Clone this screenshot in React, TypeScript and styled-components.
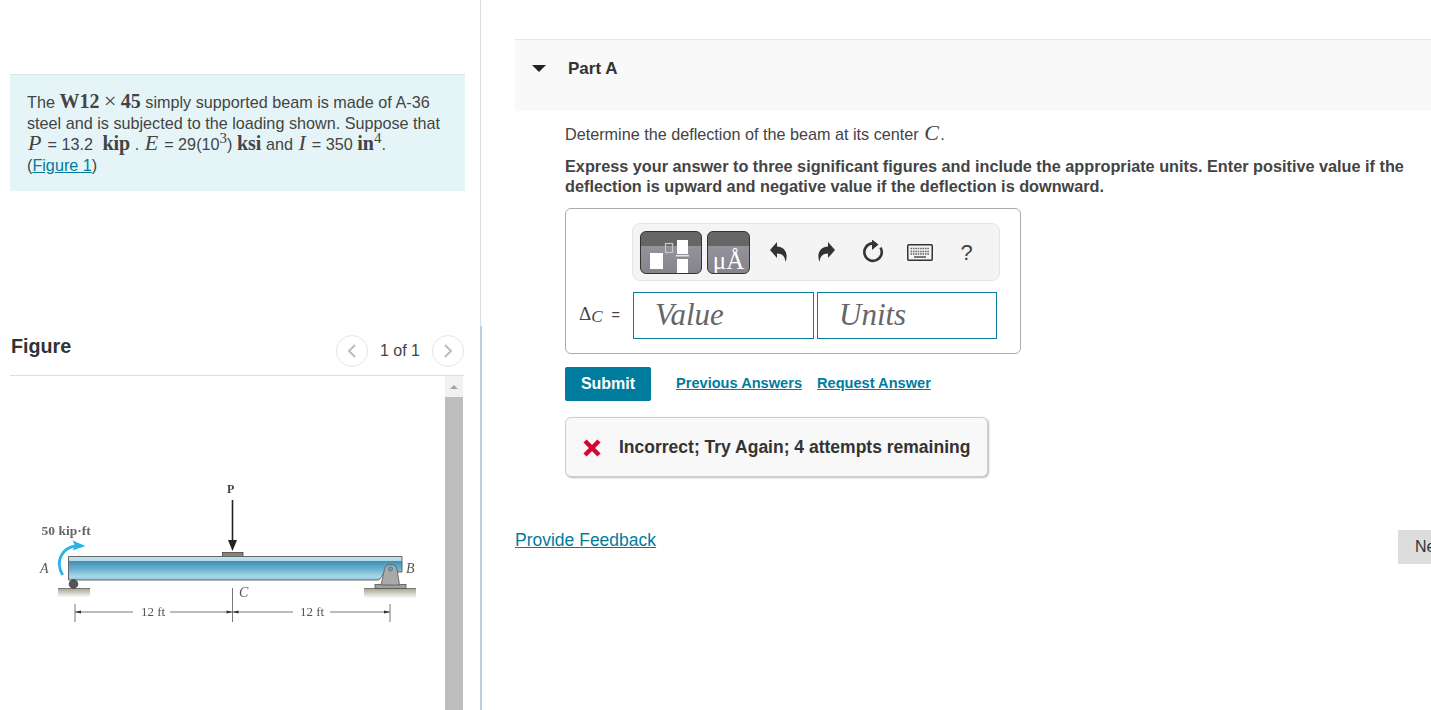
import styled, { createGlobalStyle } from "styled-components";

const GlobalStyle = createGlobalStyle`
  html, body {
    margin: 0;
    padding: 0;
    background: #fff;
  }
  body {
    font-family: "Liberation Sans", Arial, sans-serif;
    color: #333;
    overflow: hidden;
  }
`;

const Page = styled.div`
  display: flex;
  width: 1431px;
  height: 710px;
  overflow: hidden;
`;

const LeftPane = styled.div`
  flex: 0 0 482px;
  display: flex;
  flex-direction: column;
`;

const IntroSection = styled.section`
  height: 326px;
  box-sizing: border-box;
  padding: 74px 15px 0 10px;
  border-right: 1px solid #dcdcdc;
  margin-right: 1px;
`;

const IntroBox = styled.div`
  height: 117px;
  box-sizing: border-box;
  padding: 17px 17px 0;
  background: #e5f5f7;
  border-top: 1px solid #d9e3e6;
  font-size: 16.2px;
  line-height: 21px;
  color: #444;
`;

const IntroLine = styled.div`
  height: 21px;
  white-space: nowrap;
`;

const MathText = styled.span`
  font-family: "Liberation Serif", "DejaVu Serif", serif;
  font-size: 22px;
  line-height: 0;
  color: #444;
`;

const MathBold = styled(MathText)`
  font-weight: 700;
  font-size: 20px;
`;

const MathItalic = styled(MathText)`
  margin: 0 1.5px 0 1px;
  font-style: italic;
  font-size: 22px;
`;

const Sup = styled.span`
  position: relative;
  top: -7px;
  font-family: "Liberation Serif", serif;
  font-size: 15px;
  font-weight: 400;
  line-height: 0;
`;

const TealLink = styled.a`
  color: #007c9e;
  text-decoration: underline;
`;

const FigureSection = styled.section`
  flex: 1;
  min-height: 0;
  display: flex;
  flex-direction: column;
  padding: 0 16px 0 10px;
  border-right: 2px solid #b9cfe3;
`;

const FigureHeader = styled.div`
  flex: 0 0 50px;
  box-sizing: border-box;
  display: flex;
  align-items: center;
  justify-content: space-between;
  border-bottom: 1px solid #dedede;
`;

const FigureTitle = styled.h2`
  margin: 0 0 10px 1px;
  font-size: 19.7px;
  line-height: 24px;
  font-weight: 700;
  color: #333;
`;

const Pager = styled.div`
  display: flex;
  align-items: center;
  gap: 12px;
  font-size: 16px;
  color: #444;
`;

const PagerButton = styled.span`
  width: 30px;
  height: 30px;
  border: 1px solid #e6e6e6;
  border-radius: 50%;
  display: flex;
  align-items: center;
  justify-content: center;
`;

const FigureBody = styled.div`
  flex: 1;
  min-height: 0;
  display: flex;
  justify-content: space-between;
  margin-right: 1px;
`;

const BeamSvg = styled.svg`
  display: block;
  margin-top: 94px;
  margin-left: -10px;
  filter: blur(0.4px);
`;

const Scrollbar = styled.div`
  flex: 0 0 18px;
  display: flex;
  flex-direction: column;
  background: #f1f1f1;
`;

const ScrollArrow = styled.div`
  flex: 0 0 21px;
  display: flex;
  align-items: center;
  justify-content: center;

  &::before {
    content: "";
    border-left: 4px solid transparent;
    border-right: 4px solid transparent;
    border-bottom: 4px solid #a3a3a3;
  }
`;

const ScrollThumb = styled.div`
  flex: 1;
  background: #bdbdbd;
`;

const RightPane = styled.div`
  flex: 1;
  min-width: 0;
  padding: 39px 0 0 33px;
`;

const PartHeader = styled.div`
  height: 72px;
  box-sizing: border-box;
  display: flex;
  align-items: flex-start;
  gap: 22px;
  padding: 19px 0 0 17px;
  background: #f9f9f9;
  border-top: 1px solid #e6e6e6;
  font-size: 17px;
  line-height: 20px;
  font-weight: 700;
  color: #333;
`;

const Caret = styled.span`
  margin-top: 6px;
  border-left: 7px solid transparent;
  border-right: 7px solid transparent;
  border-top: 7px solid #222;
`;

const PartBody = styled.div`
  padding: 13px 16px 0 50px;
`;

const Prompt = styled.p`
  margin: 0 0 12px;
  font-size: 16.2px;
  line-height: 20px;
  color: #444;
`;

const Instructions = styled.p`
  margin: 0;
  font-size: 16.25px;
  line-height: 20px;
  font-weight: 700;
  color: #444;
`;

const AnswerBox = styled.div`
  width: 456px;
  height: 146px;
  box-sizing: border-box;
  margin-top: 12px;
  padding: 14px 0 0 66px;
  border: 1px solid #aaa;
  border-radius: 6px;
`;

const Toolbar = styled.div`
  width: 368px;
  height: 58px;
  box-sizing: border-box;
  display: flex;
  align-items: center;
  padding: 0 0 0 7px;
  gap: 5px;
  background: #f4f4f4;
  border: 1px solid #e4e4e4;
  border-radius: 8px;
`;

const PaletteButton = styled.span<{ $width: number }>`
  width: ${(p) => p.$width}px;
  height: 43px;
  box-sizing: border-box;
  flex: none;
  display: flex;
  align-items: flex-end;
  justify-content: center;
  overflow: hidden;
  border: 1px solid #333;
  border-radius: 6px;
  background: linear-gradient(#666 0, #666 14px, #94929b 14px, #85838b 100%);
`;

const UnitsGlyph = styled.span`
  font-family: "Liberation Serif", serif;
  font-size: 25px;
  line-height: 25px;
  color: #fff;
  white-space: nowrap;
`;

const ToolSlots = styled.div`
  display: flex;
  align-items: center;
`;

const ToolSlot = styled.span`
  width: 47px;
  display: flex;
  align-items: center;
  justify-content: center;
  font-size: 22px;
  color: #444;
`;

const HelpMark = styled.span`
  margin-top: 2px;
`;

const InputRow = styled.div`
  display: flex;
  align-items: center;
  gap: 3px;
  margin: 11px 0 0 -53px;
`;

const InputLabel = styled.span`
  width: 51px;
  margin-bottom: 3px;
  font-size: 14.5px;
  color: #444;
  white-space: nowrap;
`;

const DeltaGlyph = styled.span`
  font-family: "Liberation Serif", serif;
  font-size: 19px;
`;

const Subscript = styled.i`
  position: relative;
  top: 2px;
  margin-right: 9px;
  font-family: "Liberation Serif", serif;
  font-size: 17px;
`;

const AnswerField = styled.span<{ $width: number }>`
  width: ${(p) => p.$width}px;
  height: 47px;
  box-sizing: border-box;
  display: flex;
  align-items: center;
  padding: 0 0 1px 21px;
  border: 1px solid #0b7d9e;
  font-family: "Liberation Serif", serif;
  font-style: italic;
  font-size: 31px;
  color: #666;
`;

const ActionRow = styled.div`
  display: flex;
  align-items: center;
  margin-top: 13px;
`;

const SubmitButton = styled.button`
  width: 86px;
  height: 34px;
  padding: 0;
  border: 0;
  border-radius: 2px;
  background: #007c9f;
  color: #fff;
  font-family: inherit;
  font-size: 16px;
  font-weight: 700;
`;

const ActionLink = styled(TealLink)`
  margin: 0 0 2px 25px;
  font-size: 14.6px;
  font-weight: 700;

  & + & {
    margin-left: 15px;
  }
`;

const Feedback = styled.div`
  width: 423px;
  height: 60px;
  box-sizing: border-box;
  display: flex;
  align-items: center;
  gap: 18px;
  margin-top: 16px;
  padding: 1px 0 0 17px;
  background: #f8f8f8;
  border: 1px solid #ccc;
  border-radius: 6px;
  box-shadow: 1px 1px 2px #bbb;
  font-size: 17.5px;
  font-weight: 700;
  color: #333;
`;

const FooterRow = styled.div`
  display: flex;
  align-items: flex-start;
  justify-content: space-between;
  margin: 53px -56px 0 -50px;
`;

const FeedbackLink = styled(TealLink)`
  font-size: 17.5px;
  line-height: 20px;
`;

const NextButton = styled.span`
  width: 73px;
  height: 34px;
  display: flex;
  align-items: center;
  padding-left: 17px;
  box-sizing: border-box;
  background: #ddd;
  font-size: 16px;
  color: #333;
`;

const Chevron = ({ flip }: { flip?: boolean }) => (
  <svg width="10" height="16" viewBox="0 0 10 16">
    <path
      d={flip ? "M2 2l6 6-6 6" : "M8 2L2 8l6 6"}
      fill="none"
      stroke="#bcbcbc"
      strokeWidth="2"
    />
  </svg>
);

const BeamFigure = () => (
  <BeamSvg width="430" height="170" viewBox="0 0 430 170">
    <defs>
      <linearGradient id="beamFill" x1="0" y1="0" x2="0" y2="1">
        <stop offset="0" stopColor="#c3e2ee" />
        <stop offset="0.17" stopColor="#b4dbea" />
        <stop offset="0.2" stopColor="#3f8fb4" />
        <stop offset="0.55" stopColor="#6cb3d0" />
        <stop offset="0.85" stopColor="#a9d7e9" />
        <stop offset="1" stopColor="#8cc5dc" />
      </linearGradient>
      <linearGradient id="groundFill" x1="0" y1="0" x2="0" y2="1">
        <stop offset="0" stopColor="#a9a38f" />
        <stop offset="1" stopColor="#ffffff" />
      </linearGradient>
    </defs>

    <text x="227" y="23" fontFamily="Liberation Serif" fontSize="12" fontWeight="700" fill="#444">P</text>
    <path d="M232.5 30V72" stroke="#222" strokeWidth="1.6" />
    <path d="M228 70h9l-4.5 11z" fill="#222" />
    <rect x="222.5" y="82.5" width="20.5" height="4" fill="#8a8272" stroke="#444" strokeWidth="0.8" />

    <path
      d="M68.5 86.5H402V102H386C382 103 381 110 378 110H68.5Z"
      fill="url(#beamFill)"
      stroke="#666"
      strokeWidth="1"
    />

    <path d="M62.7 105C55 92 61 78 76 76" fill="none" stroke="#29b4e6" strokeWidth="2.8" />
    <path d="M85.5 76L72.5 70.5L75 76L72.5 80.5Z" fill="#29b4e6" />
    <text x="41.5" y="65" fontFamily="Liberation Serif" fontSize="13.5" fontWeight="700" fill="#666">50 kip·ft</text>
    <text x="40" y="103" fontFamily="Liberation Serif" fontSize="14" fontStyle="italic" fill="#555">A</text>
    <text x="406" y="103" fontFamily="Liberation Serif" fontSize="14" fontStyle="italic" fill="#555">B</text>
    <text x="239" y="127" fontFamily="Liberation Serif" fontSize="14" fontStyle="italic" fill="#555">C</text>

    <rect x="58" y="118.5" width="32" height="9" fill="url(#groundFill)" />
    <path d="M58 118.5H90" stroke="#777" strokeWidth="1" />
    <circle cx="73.5" cy="114" r="4.3" fill="#555" stroke="#333" strokeWidth="0.8" />

    <rect x="364" y="118.5" width="52" height="10" fill="url(#groundFill)" />
    <path d="M364 118.5H416" stroke="#777" strokeWidth="1" />
    <rect x="375" y="114.5" width="31" height="4" fill="#a0a0a0" stroke="#555" strokeWidth="0.8" />
    <path d="M381 115L384.5 99C385.5 93 396 93 397 99L399.5 115Z" fill="#a9a9a9" stroke="#555" strokeWidth="0.8" />
    <circle cx="390.5" cy="99" r="2.2" fill="#4aa6cf" stroke="#555" strokeWidth="0.5" />

    <g stroke="#666" strokeWidth="0.9" fill="none">
      <path d="M75 134V152M232.5 118V152M390 134V152" />
      <path d="M75 142H133M170 142H232.5M232.5 142H293M330 142H390" />
    </g>
    <g fill="#333">
      <path d="M75 142l6-1.5v3z" />
      <path d="M232.5 142l-6-1.5v3z" />
      <path d="M232.5 142l6-1.5v3z" />
      <path d="M390 142l-6-1.5v3z" />
    </g>
    <text x="141" y="146" fontFamily="Liberation Serif" fontSize="13" fill="#555">12 ft</text>
    <text x="300" y="146" fontFamily="Liberation Serif" fontSize="13" fill="#555">12 ft</text>
  </BeamSvg>
);

const TemplateIcon = () => (
  <svg width="60" height="41" viewBox="0 0 60 41">
    <rect x="9" y="21" width="13" height="16" fill="#fff" />
    <rect x="24.5" y="11.5" width="7" height="9" fill="none" stroke="#c8c8c8" strokeWidth="1.2" />
    <rect x="36" y="8" width="11" height="14" fill="#fff" />
    <rect x="35" y="23" width="13" height="1.5" fill="#e8e8e8" />
    <rect x="36" y="27" width="11" height="14" fill="#fff" />
  </svg>
);

const UndoIcon = ({ flip }: { flip?: boolean }) => (
  <svg width="20" height="22" viewBox="0 0 20 22" style={flip ? { transform: "scaleX(-1)" } : undefined}>
    <path d="M1 9L8 1V5.5C15 5.5 20 12 16.5 21C16 15 13 12.5 8 12.5V17Z" fill="#333" />
  </svg>
);

const ResetIcon = () => (
  <svg width="24" height="24" viewBox="0 0 24 24">
    <path d="M11.5 3.4A8.7 8.7 0 1 0 19.5 7.6" fill="none" stroke="#333" strokeWidth="2.6" />
    <path d="M11 -0.5L17.5 4.5L11 10Z" fill="#333" />
  </svg>
);

const KeyboardIcon = () => (
  <svg width="26" height="17" viewBox="0 0 26 17">
    <rect x="0.75" y="0.75" width="24.5" height="15.5" rx="1" fill="#f4f4f4" stroke="#333" strokeWidth="1.5" />
    <path d="M3.5 4.5H22.5M3.5 7.5H22.5M3.5 10H22.5" stroke="#666" strokeWidth="1.4" strokeDasharray="1.6 0.8" />
    <path d="M7 13H19" stroke="#444" strokeWidth="1.4" />
  </svg>
);

const CrossIcon = () => (
  <svg width="18" height="18" viewBox="0 0 18 18">
    <path d="M2 2L16 16M16 2L2 16" stroke="#d9042b" strokeWidth="4.4" />
  </svg>
);

export default function App() {
  return (
    <Page>
      <GlobalStyle />
      <LeftPane>
        <IntroSection>
          <IntroBox>
            <IntroLine>
              The <MathBold>W12</MathBold> <MathText>×</MathText> <MathBold>45</MathBold> simply supported beam is made
              of A-36
            </IntroLine>
            <IntroLine>steel and is subjected to the loading shown. Suppose that</IntroLine>
            <IntroLine>
              <MathItalic>P</MathItalic> = 13.2 <MathBold>&nbsp;kip</MathBold> . <MathItalic>E</MathItalic> = 29(10
              <Sup>3</Sup>) <MathBold>ksi</MathBold> and <MathItalic>I</MathItalic> = 350 <MathBold>in</MathBold>
              <Sup>4</Sup>.
            </IntroLine>
            <IntroLine>
              (<TealLink href="#">Figure 1</TealLink>)
            </IntroLine>
          </IntroBox>
        </IntroSection>
        <FigureSection>
          <FigureHeader>
            <FigureTitle>Figure</FigureTitle>
            <Pager>
              <PagerButton>
                <Chevron />
              </PagerButton>
              <span>1 of 1</span>
              <PagerButton>
                <Chevron flip />
              </PagerButton>
            </Pager>
          </FigureHeader>
          <FigureBody>
            <BeamFigure />
            <Scrollbar>
              <ScrollArrow />
              <ScrollThumb />
            </Scrollbar>
          </FigureBody>
        </FigureSection>
      </LeftPane>
      <RightPane>
        <PartHeader>
          <Caret />
          Part A
        </PartHeader>
        <PartBody>
          <Prompt>
            Determine the deflection of the beam at its center <MathItalic>C</MathItalic>.
          </Prompt>
          <Instructions>
            Express your answer to three significant figures and include the appropriate units. Enter positive value if
            the deflection is upward and negative value if the deflection is downward.
          </Instructions>
          <AnswerBox>
            <Toolbar>
              <PaletteButton $width={62}>
                <TemplateIcon />
              </PaletteButton>
              <PaletteButton $width={43}>
                <UnitsGlyph>μÅ</UnitsGlyph>
              </PaletteButton>
              <ToolSlots>
                <ToolSlot>
                  <UndoIcon />
                </ToolSlot>
                <ToolSlot>
                  <UndoIcon flip />
                </ToolSlot>
                <ToolSlot>
                  <ResetIcon />
                </ToolSlot>
                <ToolSlot>
                  <KeyboardIcon />
                </ToolSlot>
                <ToolSlot>
                  <HelpMark>?</HelpMark>
                </ToolSlot>
              </ToolSlots>
            </Toolbar>
            <InputRow>
              <InputLabel>
                <DeltaGlyph>Δ</DeltaGlyph>
                <Subscript>C</Subscript>=
              </InputLabel>
              <AnswerField $width={181}>Value</AnswerField>
              <AnswerField $width={180}>Units</AnswerField>
            </InputRow>
          </AnswerBox>
          <ActionRow>
            <SubmitButton>Submit</SubmitButton>
            <ActionLink href="#">Previous Answers</ActionLink>
            <ActionLink href="#">Request Answer</ActionLink>
          </ActionRow>
          <Feedback>
            <CrossIcon />
            Incorrect; Try Again; 4 attempts remaining
          </Feedback>
          <FooterRow>
            <FeedbackLink href="#">Provide Feedback</FeedbackLink>
            <NextButton>Next</NextButton>
          </FooterRow>
        </PartBody>
      </RightPane>
    </Page>
  );
}
